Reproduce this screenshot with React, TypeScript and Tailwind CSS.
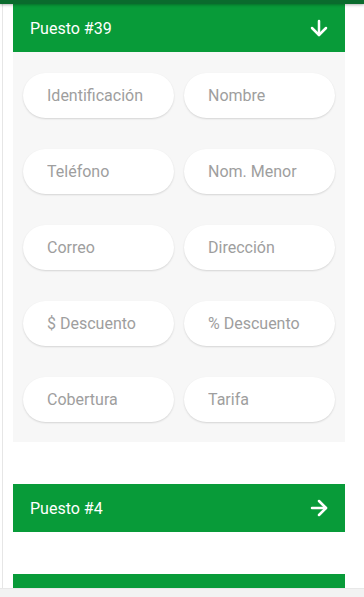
import { ArrowDown, ArrowRight } from 'lucide-react';

const fields = [
    ['Identificación', 'Nombre'],
    ['Teléfono', 'Nom. Menor'],
    ['Correo', 'Dirección'],
    ['$ Descuento', '% Descuento'],
    ['Cobertura', 'Tarifa'],
];

function Header({ title, open }: { title: string; open?: boolean }) {
    return (
        <div className="h-[48px] shrink-0 bg-[#089b39] flex items-center justify-between pl-[17px] pr-[14px] text-white">
            <span className="text-[16px] leading-none pt-[1px]">{title}</span>
            {open ? (
                <ArrowDown size={24} strokeWidth={2.5} />
            ) : (
                <ArrowRight size={24} strokeWidth={2.5} />
            )}
        </div>
    );
}

export default function App() {
    return (
        <div
            className="w-[364px] h-[597px] overflow-hidden bg-white flex flex-col"
            style={{ fontFamily: 'Roboto, "Liberation Sans", sans-serif' }}
        >
            {/* barra superior */}
            <div className="h-[4px] shrink-0 bg-[#0a6b2d] shadow-[0_1px_3px_rgba(0,0,0,0.3)] relative z-10"></div>

            <div className="flex-1 overflow-hidden ml-[2px] border-l border-[#e6e6e6] pl-[10px] pr-[19px] flex flex-col">
                <Header title="Puesto #39" open />

                <div className="bg-[#f7f7f7] px-[10px] pt-[21px] pb-[20px] flex flex-col gap-[31px]">
                    {fields.map((row) => (
                        <div key={row[0]} className="grid grid-cols-2 gap-[10px]">
                            {row.map((f) => (
                                <input
                                    key={f}
                                    placeholder={f}
                                    className="h-[45px] w-full min-w-0 rounded-full bg-white pl-[24px] pr-2 text-[16px] text-[#555] placeholder:text-[#9e9e9e] shadow-[0_1px_2px_rgba(0,0,0,0.14)] outline-none"
                                />
                            ))}
                        </div>
                    ))}
                </div>

                <div className="h-[42px] shrink-0"></div>
                <Header title="Puesto #4" />
                <div className="h-[42px] shrink-0"></div>
                {/* siguiente puesto, cortado por el borde */}
                <div className="h-[48px] shrink-0 bg-[#089b39]"></div>
            </div>

            {/* barra inferior */}
            <div className="h-[9px] shrink-0 bg-[#f2f2f2] border-t border-[#e8e8e8]"></div>
        </div>
    );
}
